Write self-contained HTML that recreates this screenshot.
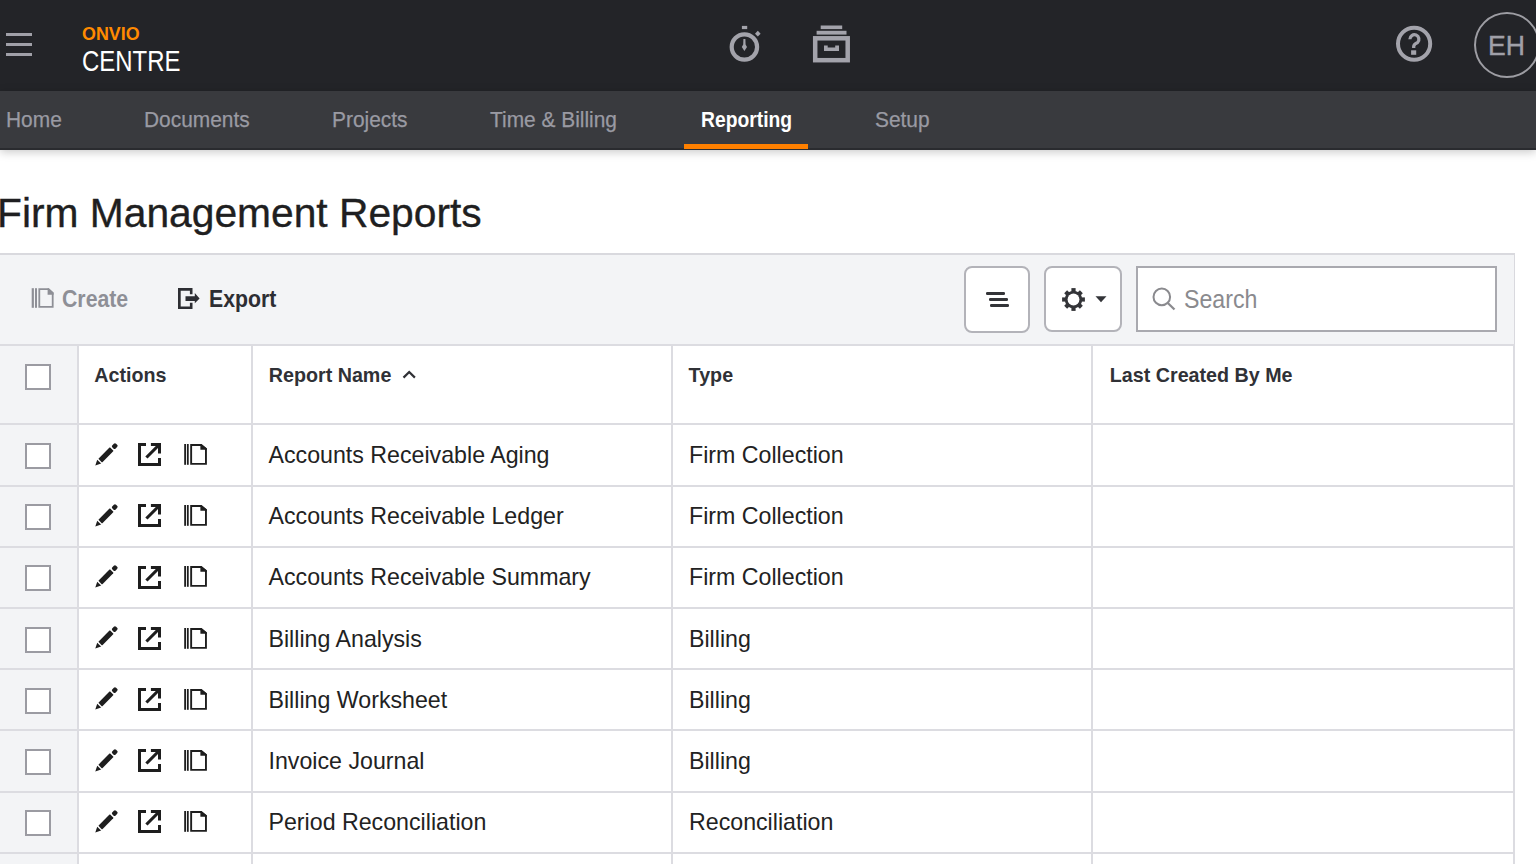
<!DOCTYPE html>
<html><head><meta charset="utf-8">
<style>
*{margin:0;padding:0;box-sizing:border-box}
html,body{width:1536px;height:864px;overflow:hidden;background:#fff;font-family:"Liberation Sans",sans-serif}
.a{position:absolute;white-space:nowrap;line-height:1}
#top{position:absolute;left:0;top:0;width:1536px;height:91px;background:#232428}
#nav{position:absolute;left:0;top:91px;width:1536px;height:59px;background:#393a3e;border-bottom:2px solid #2a2b2f;box-shadow:0 2px 9px rgba(0,0,0,0.22)}
.nv{font-size:22px;color:#9a9aa3;transform-origin:0 0;transform:scaleX(0.95);-webkit-text-stroke:0.25px #9a9aa3}
#toolbar{position:absolute;left:0;top:253px;width:1515px;height:92px;background:#f3f4f6;border-top:2px solid #d9d9de;border-right:1.5px solid #d9d9de}
.hl{position:absolute;left:0;width:1515px;height:2px;background:#dcdce1}
.vl{position:absolute;top:344px;width:2px;height:520px;background:#dcdce1}
.cb{position:absolute;left:25px;width:26px;height:26px;border:2px solid #9b9ba2;background:#fff}
.th{font-size:19.7px;font-weight:bold;color:#303136}
.td{font-size:23.2px;color:#222}
</style></head><body>
<div id="top"></div>
<!-- hamburger -->
<div style="position:absolute;left:5.5px;top:33.3px;width:26.5px;height:3px;background:#a0a0a8"></div>
<div style="position:absolute;left:5.5px;top:43.3px;width:26.5px;height:3px;background:#a0a0a8"></div>
<div style="position:absolute;left:5.5px;top:53.3px;width:26.5px;height:3px;background:#a0a0a8"></div>
<div class="a" style="left:82px;top:23.5px;font-size:19px;font-weight:bold;color:#ff8a00;transform-origin:0 0;transform:scaleX(0.94)">ONVIO</div>
<div class="a" style="left:81.5px;top:47.2px;font-size:28.6px;color:#fff;transform-origin:0 0;transform:scaleX(0.837)">CENTRE</div>


<!-- stopwatch -->
<svg style="position:absolute;left:726px;top:22px" width="40" height="40" viewBox="726 22 40 40">
<circle cx="744.4" cy="47" r="12.7" fill="none" stroke="#a3a3ab" stroke-width="4.2"/>
<rect x="741.9" y="25.9" width="5.3" height="3.2" fill="#a3a3ab"/>
<rect x="755.8" y="31.7" width="4" height="4" fill="#a3a3ab" transform="rotate(45 757.8 33.7)"/>
<path d="M743.4 39 H745.4 L745.6 44.5 L747 47 L744.4 51 L741.8 47 L743.2 44.5 Z" fill="#a3a3ab"/>
</svg>
<!-- archive -->
<svg style="position:absolute;left:810px;top:22px" width="44" height="44" viewBox="810 22 44 44">
<rect x="820.7" y="25.5" width="21.5" height="3.6" fill="#a3a3ab"/>
<rect x="816.6" y="30.8" width="29.9" height="3.8" fill="#a3a3ab"/>
<rect x="815.2" y="38.3" width="32.5" height="21.9" fill="none" stroke="#a3a3ab" stroke-width="4.5"/>
<path d="M824 45.5 H827.7 V47.6 H835.2 V45.5 H839 V51 H824 Z" fill="#a3a3ab"/>
</svg>
<!-- help -->
<svg style="position:absolute;left:1392px;top:22px" width="44" height="44" viewBox="1392 22 44 44">
<circle cx="1414.1" cy="43.75" r="16.1" fill="none" stroke="#a3a3ab" stroke-width="4"/>
<path d="M1409.9 39.3 A4.5 4.5 0 1 1 1417.6 42.4 Q1413.7 44.2 1413.7 46.5 V48" fill="none" stroke="#a3a3ab" stroke-width="3.3"/>
<rect x="1411.1" y="50.3" width="5.1" height="4.5" fill="#a3a3ab"/>
</svg>
<!-- avatar -->
<div style="position:absolute;left:1473.6px;top:11.6px;width:66.5px;height:66.3px;border:2px solid #9d9da3;border-radius:50%"></div>
<div class="a" style="left:1487.5px;top:31.5px;font-size:28px;color:#a0a0a8;-webkit-text-stroke:0.4px #a0a0a8;transform-origin:0 0;transform:scaleX(0.95)">EH</div>

<div id="nav"></div>
<div class="a nv" style="left:6px;top:108.9px">Home</div>
<div class="a nv" style="left:144px;top:108.9px">Documents</div>
<div class="a nv" style="left:332px;top:108.9px">Projects</div>
<div class="a nv" style="left:490px;top:108.9px">Time &amp; Billing</div>
<div class="a nv" style="left:700.6px;top:108.9px;color:#fff;font-weight:bold;transform:scaleX(0.877);-webkit-text-stroke:0">Reporting</div>
<div class="a nv" style="left:875px;top:108.9px">Setup</div>
<div style="position:absolute;left:684px;top:144px;width:124px;height:5px;background:#ff8000"></div>

<div class="a" style="left:-3px;top:191.5px;font-size:41.5px;color:#1f1f21;-webkit-text-stroke:0.35px #1f1f21;transform-origin:0 0;transform:scaleX(0.982)">Firm Management Reports</div>

<div id="toolbar"></div>
<svg style="position:absolute;left:30px;top:286px" width="26" height="24" viewBox="30 286 26 24">
<rect x="31.7" y="288.2" width="2.2" height="19.6" fill="#8e8f96"/>
<rect x="35" y="288.2" width="2" height="19.6" fill="#8e8f96"/>
<path d="M39.3 289.1 H48.4 L52.7 293.1 V306.9 H39.3 Z" fill="none" stroke="#8e8f96" stroke-width="1.8"/>
<path d="M47.6 288.2 H48.8 L53.6 292.5 V294.7 H47.6 Z" fill="#8e8f96"/>
</svg>
<div class="a" style="left:61.8px;top:287.5px;font-size:23.2px;font-weight:bold;color:#8e8f96;transform-origin:0 0;transform:scaleX(0.917)">Create</div>
<div class="a" style="left:208.6px;top:287.5px;font-size:23.2px;font-weight:bold;color:#2d2e33;transform-origin:0 0;transform:scaleX(0.917)">Export</div>

<div style="position:absolute;left:964px;top:266px;width:66px;height:66.5px;border:2px solid #b3b3b9;border-radius:8px;background:#fff"></div>
<div style="position:absolute;left:1044px;top:266px;width:78px;height:66px;border:2px solid #b3b3b9;border-radius:8px;background:#fff"></div>
<div style="position:absolute;left:1136px;top:266px;width:361px;height:66px;border:2px solid #a9a9af;background:#fff"></div>
<div class="a" style="left:1184px;top:286px;font-size:26px;color:#8a8a8e;transform-origin:0 0;transform:scaleX(0.89)">Search</div>


<!-- sort caret -->
<svg style="position:absolute;left:402px;top:370px" width="15" height="9" viewBox="0 0 15 9"><path d="M1.5 7.6 L7.2 2 L12.9 7.6" fill="none" stroke="#303136" stroke-width="2.2"/></svg>
<!-- export icon -->
<svg style="position:absolute;left:178px;top:287.8px" width="22" height="22" viewBox="0 0 22 22">
<path d="M0 0 H14.5 V6.3 H11.9 V2.7 H2.7 V18.4 H11.9 V14.8 H14.5 V21.1 H0 Z" fill="#2d2e33"/>
<path d="M7.5 8.2 H16.8 V5.1 L21.6 10.5 L16.8 15.3 V12.9 H7.5 Z" fill="#2d2e33"/>
</svg>
<!-- lines icon -->
<div style="position:absolute;left:986px;top:292px;width:19px;height:3px;background:#333438;border-radius:1.2px"></div>
<div style="position:absolute;left:989px;top:298px;width:19px;height:3px;background:#333438;border-radius:1.2px"></div>
<div style="position:absolute;left:990.3px;top:303.9px;width:19px;height:3px;background:#333438;border-radius:1.2px"></div>
<!-- gear -->
<svg style="position:absolute;left:1061.35px;top:286.7px" width="25" height="25" viewBox="-12.5 -12.5 25 25">
<g fill="#333438">
<rect x="-2.1" y="-11.4" width="4.2" height="22.8"/>
<rect x="-2.1" y="-11.1" width="4.2" height="22.2" transform="rotate(45)"/>
<rect x="-2.1" y="-11.4" width="4.2" height="22.8" transform="rotate(90)"/>
<rect x="-2.1" y="-11.1" width="4.2" height="22.2" transform="rotate(135)"/>
</g>
<circle cx="0" cy="0" r="7.3" fill="none" stroke="#333438" stroke-width="2.9"/>
<circle cx="0" cy="0" r="5.9" fill="#fff"/>
</svg>
<svg style="position:absolute;left:1095px;top:296px" width="12" height="7" viewBox="0 0 12 7"><path d="M0.5 0.2 H11.5 L6 6.3 Z" fill="#333438"/></svg>
<!-- search icon -->
<svg style="position:absolute;left:1151px;top:286px" width="26" height="26" viewBox="0 0 26 26">
<circle cx="10.8" cy="10.9" r="8.3" fill="none" stroke="#8a8a8e" stroke-width="2"/>
<path d="M16.8 17 L23.5 23.5" stroke="#8a8a8e" stroke-width="2.3"/>
</svg>

<!-- table -->
<div style="position:absolute;left:0;top:344px;width:77px;height:520px;background:#f3f4f6"></div>
<div class="hl" style="top:344px"></div>
<div class="hl" style="top:423px"></div>
<div class="vl" style="left:77px"></div>
<div class="vl" style="left:251px"></div>
<div class="vl" style="left:671px"></div>
<div class="vl" style="left:1091px"></div>
<div class="vl" style="left:1513px"></div>

<div class="cb" style="top:364px"></div>
<div class="a th" style="left:94.3px;top:365.5px">Actions</div>
<div class="a th" style="left:268.8px;top:365.5px">Report Name</div>
<div class="a th" style="left:688.6px;top:365.5px">Type</div>
<div class="a th" style="left:1109.8px;top:365.5px">Last Created By Me</div>

<div class="hl" style="top:484.5px"></div>
<div class="cb" style="top:442.9px"></div>
<svg style="position:absolute;left:95px;top:442.6px" width="23" height="23" viewBox="0 0 23 23">
<g transform="translate(0.3,22.5) rotate(-45)">
<path d="M0 0 L5.5 -2.8 L5.5 2.8 Z" fill="#1e1e1e"/>
<rect x="6.9" y="-2.65" width="16.3" height="5.3" rx="0.5" fill="#1e1e1e"/>
<rect x="24.9" y="-2.3" width="5.2" height="4.6" rx="1.6" fill="#1e1e1e"/>
</g></svg>
<svg style="position:absolute;left:138px;top:443.1px" width="23" height="23" viewBox="0 0 23 23">
<path d="M8 0 H0 V23 H23 V15 H20 V20 H3 V3 H8 Z" fill="#1e1e1e"/>
<path d="M12.9 0 H23 V10.6 H20 V5.1 L9.5 15.6 L7.3 13.4 L17.8 3 H12.9 Z" fill="#1e1e1e"/>
</svg>
<svg style="position:absolute;left:184px;top:444.0px" width="24" height="22" viewBox="0 0 24 22">
<rect x="0.2" y="0" width="1.9" height="20.8" fill="#1e1e1e"/>
<rect x="3.0" y="0" width="1.7" height="20.8" fill="#1e1e1e"/>
<path d="M7.15 0.95 H17.0 L21.95 5.0 V19.85 H7.15 Z" fill="none" stroke="#1e1e1e" stroke-width="1.9"/>
<path d="M16.4 0 H17.4 L22.9 4.5 V5.8 H16.4 Z" fill="#1e1e1e"/>
</svg>
<div class="a td" style="left:268.5px;top:444.0px">Accounts Receivable Aging</div>
<div class="a td" style="left:689px;top:444.0px">Firm Collection</div>
<div class="hl" style="top:545.7px"></div>
<div class="cb" style="top:504.1px"></div>
<svg style="position:absolute;left:95px;top:503.8px" width="23" height="23" viewBox="0 0 23 23">
<g transform="translate(0.3,22.5) rotate(-45)">
<path d="M0 0 L5.5 -2.8 L5.5 2.8 Z" fill="#1e1e1e"/>
<rect x="6.9" y="-2.65" width="16.3" height="5.3" rx="0.5" fill="#1e1e1e"/>
<rect x="24.9" y="-2.3" width="5.2" height="4.6" rx="1.6" fill="#1e1e1e"/>
</g></svg>
<svg style="position:absolute;left:138px;top:504.3px" width="23" height="23" viewBox="0 0 23 23">
<path d="M8 0 H0 V23 H23 V15 H20 V20 H3 V3 H8 Z" fill="#1e1e1e"/>
<path d="M12.9 0 H23 V10.6 H20 V5.1 L9.5 15.6 L7.3 13.4 L17.8 3 H12.9 Z" fill="#1e1e1e"/>
</svg>
<svg style="position:absolute;left:184px;top:505.2px" width="24" height="22" viewBox="0 0 24 22">
<rect x="0.2" y="0" width="1.9" height="20.8" fill="#1e1e1e"/>
<rect x="3.0" y="0" width="1.7" height="20.8" fill="#1e1e1e"/>
<path d="M7.15 0.95 H17.0 L21.95 5.0 V19.85 H7.15 Z" fill="none" stroke="#1e1e1e" stroke-width="1.9"/>
<path d="M16.4 0 H17.4 L22.9 4.5 V5.8 H16.4 Z" fill="#1e1e1e"/>
</svg>
<div class="a td" style="left:268.5px;top:505.2px">Accounts Receivable Ledger</div>
<div class="a td" style="left:689px;top:505.2px">Firm Collection</div>
<div class="hl" style="top:606.9px"></div>
<div class="cb" style="top:565.3px"></div>
<svg style="position:absolute;left:95px;top:565.0px" width="23" height="23" viewBox="0 0 23 23">
<g transform="translate(0.3,22.5) rotate(-45)">
<path d="M0 0 L5.5 -2.8 L5.5 2.8 Z" fill="#1e1e1e"/>
<rect x="6.9" y="-2.65" width="16.3" height="5.3" rx="0.5" fill="#1e1e1e"/>
<rect x="24.9" y="-2.3" width="5.2" height="4.6" rx="1.6" fill="#1e1e1e"/>
</g></svg>
<svg style="position:absolute;left:138px;top:565.5px" width="23" height="23" viewBox="0 0 23 23">
<path d="M8 0 H0 V23 H23 V15 H20 V20 H3 V3 H8 Z" fill="#1e1e1e"/>
<path d="M12.9 0 H23 V10.6 H20 V5.1 L9.5 15.6 L7.3 13.4 L17.8 3 H12.9 Z" fill="#1e1e1e"/>
</svg>
<svg style="position:absolute;left:184px;top:566.4px" width="24" height="22" viewBox="0 0 24 22">
<rect x="0.2" y="0" width="1.9" height="20.8" fill="#1e1e1e"/>
<rect x="3.0" y="0" width="1.7" height="20.8" fill="#1e1e1e"/>
<path d="M7.15 0.95 H17.0 L21.95 5.0 V19.85 H7.15 Z" fill="none" stroke="#1e1e1e" stroke-width="1.9"/>
<path d="M16.4 0 H17.4 L22.9 4.5 V5.8 H16.4 Z" fill="#1e1e1e"/>
</svg>
<div class="a td" style="left:268.5px;top:566.4px">Accounts Receivable Summary</div>
<div class="a td" style="left:689px;top:566.4px">Firm Collection</div>
<div class="hl" style="top:668.1px"></div>
<div class="cb" style="top:626.5px"></div>
<svg style="position:absolute;left:95px;top:626.2px" width="23" height="23" viewBox="0 0 23 23">
<g transform="translate(0.3,22.5) rotate(-45)">
<path d="M0 0 L5.5 -2.8 L5.5 2.8 Z" fill="#1e1e1e"/>
<rect x="6.9" y="-2.65" width="16.3" height="5.3" rx="0.5" fill="#1e1e1e"/>
<rect x="24.9" y="-2.3" width="5.2" height="4.6" rx="1.6" fill="#1e1e1e"/>
</g></svg>
<svg style="position:absolute;left:138px;top:626.7px" width="23" height="23" viewBox="0 0 23 23">
<path d="M8 0 H0 V23 H23 V15 H20 V20 H3 V3 H8 Z" fill="#1e1e1e"/>
<path d="M12.9 0 H23 V10.6 H20 V5.1 L9.5 15.6 L7.3 13.4 L17.8 3 H12.9 Z" fill="#1e1e1e"/>
</svg>
<svg style="position:absolute;left:184px;top:627.6px" width="24" height="22" viewBox="0 0 24 22">
<rect x="0.2" y="0" width="1.9" height="20.8" fill="#1e1e1e"/>
<rect x="3.0" y="0" width="1.7" height="20.8" fill="#1e1e1e"/>
<path d="M7.15 0.95 H17.0 L21.95 5.0 V19.85 H7.15 Z" fill="none" stroke="#1e1e1e" stroke-width="1.9"/>
<path d="M16.4 0 H17.4 L22.9 4.5 V5.8 H16.4 Z" fill="#1e1e1e"/>
</svg>
<div class="a td" style="left:268.5px;top:627.6px">Billing Analysis</div>
<div class="a td" style="left:689px;top:627.6px">Billing</div>
<div class="hl" style="top:729.3px"></div>
<div class="cb" style="top:687.7px"></div>
<svg style="position:absolute;left:95px;top:687.4px" width="23" height="23" viewBox="0 0 23 23">
<g transform="translate(0.3,22.5) rotate(-45)">
<path d="M0 0 L5.5 -2.8 L5.5 2.8 Z" fill="#1e1e1e"/>
<rect x="6.9" y="-2.65" width="16.3" height="5.3" rx="0.5" fill="#1e1e1e"/>
<rect x="24.9" y="-2.3" width="5.2" height="4.6" rx="1.6" fill="#1e1e1e"/>
</g></svg>
<svg style="position:absolute;left:138px;top:687.9px" width="23" height="23" viewBox="0 0 23 23">
<path d="M8 0 H0 V23 H23 V15 H20 V20 H3 V3 H8 Z" fill="#1e1e1e"/>
<path d="M12.9 0 H23 V10.6 H20 V5.1 L9.5 15.6 L7.3 13.4 L17.8 3 H12.9 Z" fill="#1e1e1e"/>
</svg>
<svg style="position:absolute;left:184px;top:688.8px" width="24" height="22" viewBox="0 0 24 22">
<rect x="0.2" y="0" width="1.9" height="20.8" fill="#1e1e1e"/>
<rect x="3.0" y="0" width="1.7" height="20.8" fill="#1e1e1e"/>
<path d="M7.15 0.95 H17.0 L21.95 5.0 V19.85 H7.15 Z" fill="none" stroke="#1e1e1e" stroke-width="1.9"/>
<path d="M16.4 0 H17.4 L22.9 4.5 V5.8 H16.4 Z" fill="#1e1e1e"/>
</svg>
<div class="a td" style="left:268.5px;top:688.8px">Billing Worksheet</div>
<div class="a td" style="left:689px;top:688.8px">Billing</div>
<div class="hl" style="top:790.5px"></div>
<div class="cb" style="top:748.9px"></div>
<svg style="position:absolute;left:95px;top:748.6px" width="23" height="23" viewBox="0 0 23 23">
<g transform="translate(0.3,22.5) rotate(-45)">
<path d="M0 0 L5.5 -2.8 L5.5 2.8 Z" fill="#1e1e1e"/>
<rect x="6.9" y="-2.65" width="16.3" height="5.3" rx="0.5" fill="#1e1e1e"/>
<rect x="24.9" y="-2.3" width="5.2" height="4.6" rx="1.6" fill="#1e1e1e"/>
</g></svg>
<svg style="position:absolute;left:138px;top:749.1px" width="23" height="23" viewBox="0 0 23 23">
<path d="M8 0 H0 V23 H23 V15 H20 V20 H3 V3 H8 Z" fill="#1e1e1e"/>
<path d="M12.9 0 H23 V10.6 H20 V5.1 L9.5 15.6 L7.3 13.4 L17.8 3 H12.9 Z" fill="#1e1e1e"/>
</svg>
<svg style="position:absolute;left:184px;top:750.0px" width="24" height="22" viewBox="0 0 24 22">
<rect x="0.2" y="0" width="1.9" height="20.8" fill="#1e1e1e"/>
<rect x="3.0" y="0" width="1.7" height="20.8" fill="#1e1e1e"/>
<path d="M7.15 0.95 H17.0 L21.95 5.0 V19.85 H7.15 Z" fill="none" stroke="#1e1e1e" stroke-width="1.9"/>
<path d="M16.4 0 H17.4 L22.9 4.5 V5.8 H16.4 Z" fill="#1e1e1e"/>
</svg>
<div class="a td" style="left:268.5px;top:750.0px">Invoice Journal</div>
<div class="a td" style="left:689px;top:750.0px">Billing</div>
<div class="hl" style="top:851.7px"></div>
<div class="cb" style="top:810.1px"></div>
<svg style="position:absolute;left:95px;top:809.8px" width="23" height="23" viewBox="0 0 23 23">
<g transform="translate(0.3,22.5) rotate(-45)">
<path d="M0 0 L5.5 -2.8 L5.5 2.8 Z" fill="#1e1e1e"/>
<rect x="6.9" y="-2.65" width="16.3" height="5.3" rx="0.5" fill="#1e1e1e"/>
<rect x="24.9" y="-2.3" width="5.2" height="4.6" rx="1.6" fill="#1e1e1e"/>
</g></svg>
<svg style="position:absolute;left:138px;top:810.3px" width="23" height="23" viewBox="0 0 23 23">
<path d="M8 0 H0 V23 H23 V15 H20 V20 H3 V3 H8 Z" fill="#1e1e1e"/>
<path d="M12.9 0 H23 V10.6 H20 V5.1 L9.5 15.6 L7.3 13.4 L17.8 3 H12.9 Z" fill="#1e1e1e"/>
</svg>
<svg style="position:absolute;left:184px;top:811.2px" width="24" height="22" viewBox="0 0 24 22">
<rect x="0.2" y="0" width="1.9" height="20.8" fill="#1e1e1e"/>
<rect x="3.0" y="0" width="1.7" height="20.8" fill="#1e1e1e"/>
<path d="M7.15 0.95 H17.0 L21.95 5.0 V19.85 H7.15 Z" fill="none" stroke="#1e1e1e" stroke-width="1.9"/>
<path d="M16.4 0 H17.4 L22.9 4.5 V5.8 H16.4 Z" fill="#1e1e1e"/>
</svg>
<div class="a td" style="left:268.5px;top:811.2px">Period Reconciliation</div>
<div class="a td" style="left:689px;top:811.2px">Reconciliation</div>
<div class="hl" style="top:912.9px"></div>
<div class="cb" style="top:871.3px"></div>
<svg style="position:absolute;left:95px;top:871.0px" width="23" height="23" viewBox="0 0 23 23">
<g transform="translate(0.3,22.5) rotate(-45)">
<path d="M0 0 L5.5 -2.8 L5.5 2.8 Z" fill="#1e1e1e"/>
<rect x="6.9" y="-2.65" width="16.3" height="5.3" rx="0.5" fill="#1e1e1e"/>
<rect x="24.9" y="-2.3" width="5.2" height="4.6" rx="1.6" fill="#1e1e1e"/>
</g></svg>
<svg style="position:absolute;left:138px;top:871.5px" width="23" height="23" viewBox="0 0 23 23">
<path d="M8 0 H0 V23 H23 V15 H20 V20 H3 V3 H8 Z" fill="#1e1e1e"/>
<path d="M12.9 0 H23 V10.6 H20 V5.1 L9.5 15.6 L7.3 13.4 L17.8 3 H12.9 Z" fill="#1e1e1e"/>
</svg>
<svg style="position:absolute;left:184px;top:872.4px" width="24" height="22" viewBox="0 0 24 22">
<rect x="0.2" y="0" width="1.9" height="20.8" fill="#1e1e1e"/>
<rect x="3.0" y="0" width="1.7" height="20.8" fill="#1e1e1e"/>
<path d="M7.15 0.95 H17.0 L21.95 5.0 V19.85 H7.15 Z" fill="none" stroke="#1e1e1e" stroke-width="1.9"/>
<path d="M16.4 0 H17.4 L22.9 4.5 V5.8 H16.4 Z" fill="#1e1e1e"/>
</svg>
<div class="a td" style="left:268.5px;top:872.4px">Realization</div>
<div class="a td" style="left:689px;top:872.4px">Billing</div>
</body></html>
